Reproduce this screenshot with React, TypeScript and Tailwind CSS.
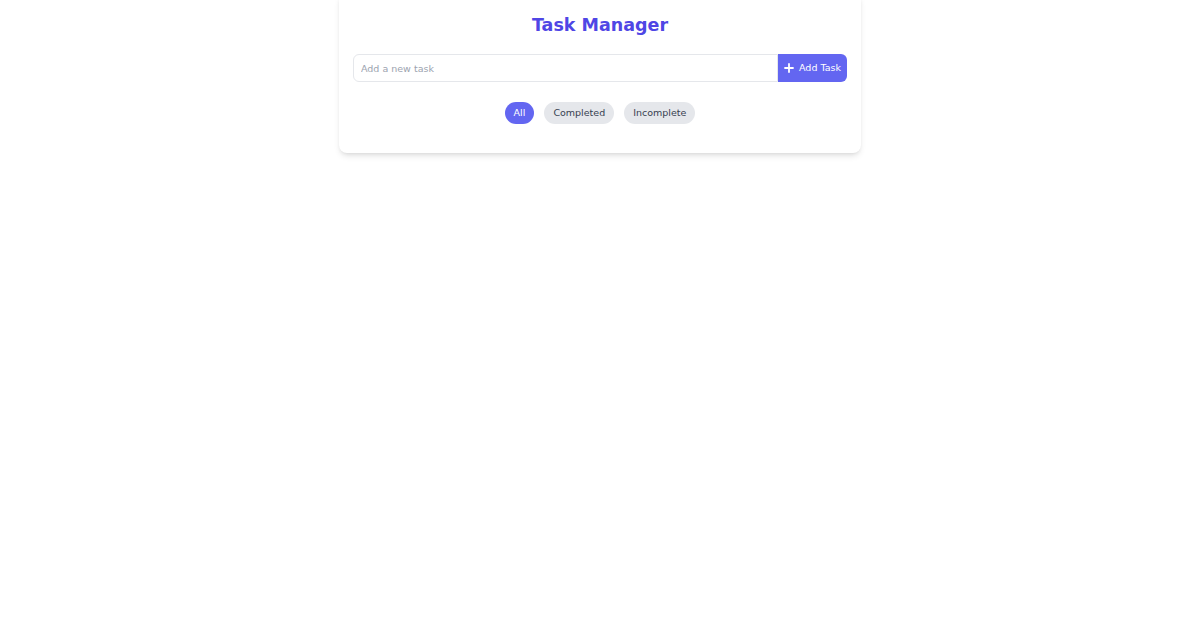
import React, { useState } from "react";

export default function App() {
  const [filter, setFilter] = useState("All");
  const filters = ["All", "Completed", "Incomplete"];
  return (
    <div
      className="min-h-[630px] w-full bg-white flex justify-center"
      style={{ fontFamily: '"DejaVu Sans", sans-serif' }}
    >
      <div className="w-[522px] -mt-2 bg-white rounded-lg shadow-md px-[14px] pt-[20px] pb-[29px] h-fit">
        <h1 className="text-center text-[17.5px] leading-[27px] font-bold text-[#4f46e5]">Task Manager</h1>
        <div className="flex mt-[15px] h-[28px]">
          <input
            className="flex-1 h-full border border-[#e5e7eb] rounded-l-md px-[7px] text-[9.5px] text-gray-700 placeholder:text-[#9ca3af] outline-none"
            placeholder="Add a new task"
          />
          <button className="h-full w-[69px] bg-[#6366f1] text-white rounded-r-md flex items-center justify-center gap-[5px] text-[9.5px]">
            <svg width="10" height="10" viewBox="0 0 10 10">
              <path d="M5 1v8M1 5h8" stroke="white" strokeWidth="1.8" strokeLinecap="round" />
            </svg>
            Add Task
          </button>
        </div>
        <div className="flex justify-center gap-[10px] mt-[20px]">
          {filters.map((f) => (
            <button
              key={f}
              onClick={() => setFilter(f)}
              className={
                "h-[22px] px-[9px] rounded-full text-[9.5px] " +
                (filter === f ? "bg-[#6366f1] text-white" : "bg-[#e5e7eb] text-[#374151]")
              }
            >
              {f}
            </button>
          ))}
        </div>
      </div>
    </div>
  );
}
